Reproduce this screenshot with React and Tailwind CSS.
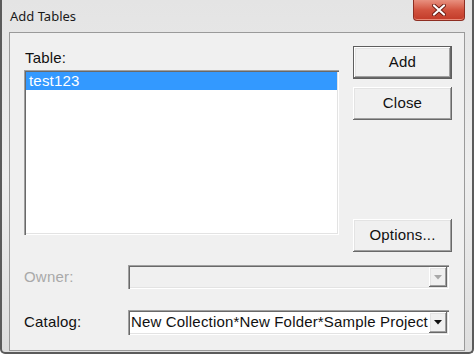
import React from 'react';

const sunken =
  'shadow-[inset_1px_1px_0_#a0a0a0,inset_2px_2px_0_#696969,inset_-1px_-1px_0_#ffffff,inset_-2px_-2px_0_#e3e3e3]';
const raised =
  'shadow-[inset_-1px_-1px_0_#696969,inset_1px_1px_0_#ffffff,inset_-2px_-2px_0_#a0a0a0,inset_2px_2px_0_#e3e3e3]';

const Btn = ({ children, isDefault, className = '' }) => (
  <button
    className={`h-[33px] w-[99px] bg-[#f0f0f0] text-[15px] tracking-[0.2px] text-[#111] ${raised} ${
      isDefault ? 'border border-[#5e5e5e]' : ''
    } ${className}`}
  >
    {children}
  </button>
);

const Arrow = ({ disabled }) => (
  <div className={`flex h-full w-[18px] items-center justify-center bg-[#f0f0f0] ${raised}`}>
    <svg width="8" height="5" viewBox="0 0 8 5">
      <path d="M0 0h8L4 4.5z" fill={disabled ? '#a8a8a8' : '#111'} />
    </svg>
  </div>
);

const Combo = ({ value, disabled, className = '' }) => (
  <div
    className={`flex w-[321px] items-stretch p-[2px] ${sunken} ${
      disabled ? 'bg-[#f0f0f0]' : 'bg-white'
    } ${className}`}
  >
    <div className="flex flex-1 items-center overflow-hidden whitespace-nowrap pl-[1px] text-[15px] tracking-[0.17px] text-[#111]">
      {value}
    </div>
    <Arrow disabled={disabled} />
  </div>
);

export default function App() {
  return (
    <div
      className="flex h-[354px] w-[474px] flex-col overflow-hidden rounded-b-[5px] border-2 border-t-0 border-[#5b5b5b] bg-gradient-to-b from-[#e4e4e4] via-[#eeeeee] to-[#dedede]"
      style={{ fontFamily: '"Liberation Sans", Arial, sans-serif' }}
    >
      {/* Title bar */}
      <div className="flex h-[32px] shrink-0 items-start justify-between pl-[8px] pr-[7px]">
        <span
          className="mt-[7px] text-[13px] text-[#1a1a1a]"
          style={{ fontFamily: '"Noto Sans", "Open Sans", sans-serif' }}
        >
          Add Tables
        </span>
        <div className="flex h-[21px] w-[52px] items-center justify-center rounded-b-[4px] border border-t-0 border-[#8e2e22] bg-gradient-to-b from-[#e8907f] via-[#d2533f] to-[#c23a28] shadow-[inset_0_-1px_0_#e98a78]">
          <svg width="14" height="12" viewBox="0 0 14 12">
            <path d="M2 1.5L12 10.5M12 1.5L2 10.5" stroke="#6b1d14" strokeWidth="4" strokeLinecap="round" />
            <path d="M2 1.5L12 10.5M12 1.5L2 10.5" stroke="#ffffff" strokeWidth="2.2" strokeLinecap="round" />
          </svg>
        </div>
      </div>

      {/* Client area */}
      <div className="mx-[7px] mb-[1px] flex flex-1 flex-col border border-[#9a9a9a] bg-[#f0f0f0] pl-[14px] pt-[13px]">
        <div className="flex h-[206px]">
          <div className="flex w-[315px] flex-col">
            <div className="flex h-[24px] items-center pl-[1px] text-[15px] tracking-[0.2px] text-[#111]">Table:</div>
            <div className={`h-[165px] bg-white p-[2px] ${sunken}`}>
              <div className="flex h-[18px] items-center bg-[#3399ff] pl-[3px] text-[15px] tracking-[0.2px] text-white">
                test123
              </div>
            </div>
          </div>
          <div className="ml-[14px] flex w-[99px] flex-col">
            <Btn isDefault>Add</Btn>
            <Btn className="mt-[8px]">Close</Btn>
            <Btn className="mt-auto">Options...</Btn>
          </div>
        </div>

        <div className="mt-[13px] flex h-[24px] items-center">
          <span className="w-[104px] text-[15px] tracking-[0.2px] text-[#a9a9a9]">Owner:</span>
          <Combo disabled className="h-full" />
        </div>

        <div className="mt-[21px] flex h-[25px] items-center">
          <span className="w-[104px] text-[15px] tracking-[0.2px] text-[#111]">Catalog:</span>
          <Combo value="New Collection*New Folder*Sample Project" className="h-full" />
        </div>
      </div>
    </div>
  );
}
